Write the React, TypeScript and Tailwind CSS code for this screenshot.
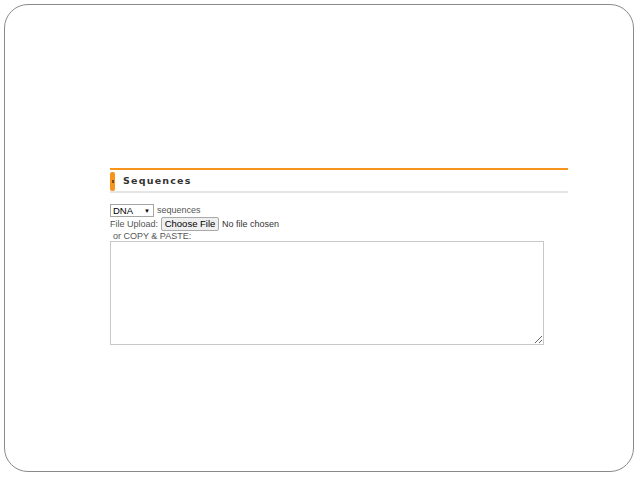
export default function App() {
  return (
    <div className="h-[478px] w-[638px] bg-white p-[4px]" style={{ fontFamily: '"Liberation Sans", Arial, sans-serif' }}>
      <div className="h-[468px] w-[630px] rounded-[24px] border border-[#8a8a8a] pl-[105px] pt-[163px]">
        <div className="w-[458px]">
          <div className="h-[2px] bg-[#f7941d]" />
          <div className="flex h-[23px] items-center border-b-2 border-[#e6e6e6] pt-[2px]">
            <div className="flex h-[19px] w-[5px] items-center justify-center rounded-[2px] bg-[#f7941d]">
              <div className="h-[3px] w-[2px] bg-[#7a4a10]" />
            </div>
            <span
              className="ml-[8px] text-[9.5px] font-bold tracking-[1.2px] text-[#333]"
              style={{ fontFamily: '"DejaVu Sans", Verdana, sans-serif' }}
            >
              Sequences
            </span>
          </div>
        </div>
        <div className="mt-[11px] flex items-center gap-[3px] text-[9px] leading-[13px] text-[#555]">
          <div className="flex h-[13px] w-[44px] items-center justify-between border border-[#a6a6a6] bg-white pl-[2px] pr-[3px] text-[9.5px] leading-[10px] text-black">
            <span>DNA</span>
            <span className="text-[6px]">▼</span>
          </div>
          <span>sequences</span>
        </div>
        <div className="flex h-[14px] items-center text-[9px] leading-[14px] text-[#555]">
          <span>File Upload:</span>
          <span className="ml-[3px] flex h-[14px] w-[58px] items-center justify-center rounded-[2px] border border-[#a9a9a9] bg-[#efefef] text-[9.5px] text-black">
            Choose File
          </span>
          <span className="ml-[3px] text-[#333]">No file chosen</span>
        </div>
        <div className="pl-[3px] text-[9px] leading-[10px] text-[#555]">or COPY &amp; PASTE:</div>
        <textarea className="block h-[104px] w-[434px] border border-[#c8c8c8] bg-white" />
      </div>
    </div>
  );
}
